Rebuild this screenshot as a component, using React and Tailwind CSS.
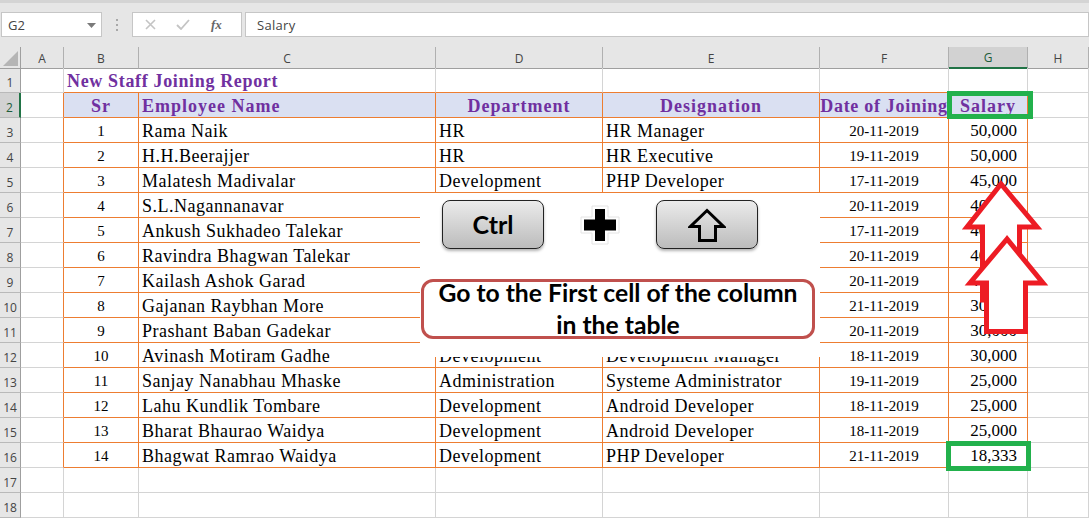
import React from "react";

const colWidths = "grid-cols-[21px_43px_75px_297px_167px_217px_129px_79px_61px]";
const letters = ["A", "B", "C", "D", "E", "F", "G", "H"];

const staff = [
  ["1", "Rama Naik", "HR", "HR Manager", "20-11-2019", "50,000"],
  ["2", "H.H.Beerajjer", "HR", "HR Executive", "19-11-2019", "50,000"],
  ["3", "Malatesh Madivalar", "Development", "PHP Developer", "17-11-2019", "45,000"],
  ["4", "S.L.Nagannanavar", "", "", "20-11-2019", "40,000"],
  ["5", "Ankush Sukhadeo Talekar", "", "", "17-11-2019", "40,000"],
  ["6", "Ravindra Bhagwan Talekar", "", "", "20-11-2019", "40,000"],
  ["7", "Kailash Ashok Garad", "", "", "20-11-2019", "40,000"],
  ["8", "Gajanan Raybhan More", "", "", "21-11-2019", "30,000"],
  ["9", "Prashant Baban Gadekar", "", "", "20-11-2019", "30,000"],
  ["10", "Avinash Motiram Gadhe", "Development", "Development Manager", "18-11-2019", "30,000"],
  ["11", "Sanjay Nanabhau Mhaske", "Administration", "Systeme Administrator", "19-11-2019", "25,000"],
  ["12", "Lahu Kundlik Tombare", "Development", "Android Developer", "18-11-2019", "25,000"],
  ["13", "Bharat Bhaurao Waidya", "Development", "Android Developer", "18-11-2019", "25,000"],
  ["14", "Bhagwat Ramrao Waidya", "Development", "PHP Developer", "21-11-2019", "18,333"],
];

function RowHead({ n, active }) {
  return (
    <div
      className={`h-[25px] flex items-center justify-center pt-[6px] border-b border-b-[#b9b9b9] border-r font-['Open_Sans',sans-serif] text-[12px] ${
        active ? "bg-[#d2d2d2] border-r-2 border-r-[#217346] text-[#1d5c3a]" : "bg-[#e6e6e6] border-r-[#9f9f9f] text-[#444]"
      }`}
    >
      {n}
    </div>
  );
}

function Blank({ edge }) {
  return <div className={`h-[25px] border-r border-r-[#d4d4d4] border-b ${edge ? "border-b-[#ed7d31]" : "border-b-[#d4d4d4]"}`} />;
}

function HeadCell({ children, left, tight }) {
  return (
    <div
      className={`h-[25px] flex items-center whitespace-nowrap pt-[2px] bg-[#dae0f2] border-r border-b border-[#ed7d31] font-bold text-[#7030a0] text-[18px] ${
        tight ? "tracking-[0.7px]" : "tracking-[1px]"
      } ${left ? "pl-[3px]" : "justify-center"}`}
    >
      {children}
    </div>
  );
}

// text is the font class of the cell, numbers run smaller than names
function Cell({ children, layout = "pl-[3px]", text = "text-[18px] tracking-[0.5px]" }) {
  return (
    <div className={`h-[25px] flex items-center whitespace-nowrap overflow-hidden pt-[2px] border-r border-b border-[#ed7d31] text-black ${layout} ${text}`}>
      {children}
    </div>
  );
}

function KeyCap({ children }) {
  return (
    <div className="w-[102px] h-[49px] flex items-center justify-center rounded-[8px] border border-[#222] bg-gradient-to-b from-[#ebebeb] to-[#bcbcbc] shadow-[0_2px_3px_rgba(0,0,0,0.3)]">
      {children}
    </div>
  );
}

function ToolBar() {
  return (
    <div className="h-[47px] pt-[9px] flex items-start bg-[#e6e6e6] border-t-[3px] border-t-[#d4d4d4]">
      <div className="ml-[1px] w-[101px] h-[25px] pt-[2px] flex items-center justify-between bg-white border border-[#c6c6c6] pl-[6px] pr-[5px] text-[13px] text-[#444]">
        <span>G2</span>
        <svg width="9" height="5" viewBox="0 0 9 5"><path d="M0 0h9L4.5 5z" fill="#7a7a7a" /></svg>
      </div>
      <div className="w-[30px] h-[25px] flex flex-col items-center justify-center gap-[3px]">
        <span className="w-[2px] h-[2px] bg-[#a8a8a8]" />
        <span className="w-[2px] h-[2px] bg-[#a8a8a8]" />
        <span className="w-[2px] h-[2px] bg-[#a8a8a8]" />
      </div>
      <div className="w-[110px] h-[25px] flex items-center bg-white border border-[#c6c6c6] pl-[12px] gap-[20px]">
        <svg width="11" height="11" viewBox="0 0 11 11"><path d="M1 1l9 9M10 1l-9 9" stroke="#c4c4c4" strokeWidth="1.6" fill="none" /></svg>
        <svg width="14" height="11" viewBox="0 0 14 11"><path d="M1 6l4 4 8-9" stroke="#c4c4c4" strokeWidth="1.8" fill="none" /></svg>
        <span className="ml-[1px] text-[13px] italic font-bold text-[#666] font-['Liberation_Serif',serif]">fx</span>
      </div>
      <div className="ml-[3px] flex-1 h-[25px] pt-[2px] flex items-center bg-white border border-[#c6c6c6] pl-[11px] text-[13px] text-[#444] tracking-[0.3px]">
        Salary
      </div>
    </div>
  );
}

function ColumnHeader() {
  return (
    <div className={`grid ${colWidths} h-[21px] bg-[#e6e6e6] font-['Open_Sans',sans-serif] text-[12px] text-[#444]`}>
      <div className="relative border-r border-r-[#9f9f9f] border-b border-b-[#9f9f9f]">
        <svg className="absolute right-[2px] bottom-[2px]" width="15" height="15" viewBox="0 0 15 15"><path d="M15 0v15H0z" fill="#b5b5b5" /></svg>
      </div>
      {letters.map((l) => (
        <div
          key={l}
          className={`flex items-center justify-center pt-[2px] border-r border-r-[#b0b0b0] border-b ${
            l === "G" ? "bg-[#d2d2d2] border-b-2 border-b-[#217346] text-[#1d5c3a]" : "border-b-[#9f9f9f]"
          }`}
        >
          {l}
        </div>
      ))}
    </div>
  );
}

function Sheet() {
  return (
    <div className={`grid ${colWidths} font-['Liberation_Serif',serif]`}>
      <RowHead n={1} />
      <Blank />
      <div className="col-span-2 h-[25px] flex items-center pl-[3px] pt-[3px] whitespace-nowrap border-r border-r-[#d4d4d4] border-b border-b-[#ed7d31] font-bold text-[#7030a0] text-[18px] tracking-[0.65px]">
        New Staff Joining Report
      </div>
      <Blank edge />
      <Blank edge />
      <Blank edge />
      <Blank edge />
      <Blank />

      <RowHead n={2} active />
      <div className="h-[25px] border-r border-r-[#ed7d31] border-b border-b-[#d4d4d4]" />
      <HeadCell>Sr</HeadCell>
      <HeadCell left>Employee Name</HeadCell>
      <HeadCell>Department</HeadCell>
      <HeadCell>Designation</HeadCell>
      <HeadCell tight>Date of Joining</HeadCell>
      <HeadCell>Salary</HeadCell>
      <Blank />

      {staff.map((row, i) => (
        <React.Fragment key={row[0]}>
          <RowHead n={i + 3} />
          <div className="h-[25px] border-r border-r-[#ed7d31] border-b border-b-[#d4d4d4]" />
          <Cell layout="justify-center" text="text-[15px]">{row[0]}</Cell>
          <Cell>{row[1]}</Cell>
          <Cell>{row[2]}</Cell>
          <Cell>{row[3]}</Cell>
          <Cell layout="justify-center" text="text-[15px]">{row[4]}</Cell>
          <Cell layout="justify-end pr-[10px]" text="text-[17px]">{row[5]}</Cell>
          <Blank />
        </React.Fragment>
      ))}

      {[17, 18].map((n) => (
        <React.Fragment key={n}>
          <RowHead n={n} />
          {letters.map((l) => (
            <Blank key={l} />
          ))}
        </React.Fragment>
      ))}
    </div>
  );
}

function ShortcutOverlay() {
  return (
    <div className="absolute left-[420px] top-[193px] w-[400px] h-[164px] bg-white font-['Lato',sans-serif]">
      <div className="flex items-center pl-[22px] pt-[7px]">
        <KeyCap>
          <span className="text-[25px] font-bold text-black">Ctrl</span>
        </KeyCap>
        <svg className="mx-[35px]" width="42" height="42" viewBox="0 0 42 42">
          <path d="M13 2h16v11h11v16H29v11H13V29H2V13h11z" fill="#fff" stroke="#e4e4e4" strokeWidth="1" />
          <path d="M16 5h10v10.500h11v11H26V37H16V26.500H5v-11h11z" fill="#000" />
        </svg>
        <KeyCap>
          <svg width="38" height="36" viewBox="0 0 38 36">
            <path d="M19 3.500L35.500 19.500H27.500V33.500H11.500V19.500H2.500z" fill="none" stroke="#000" strokeWidth="3" />
          </svg>
        </KeyCap>
      </div>
      <div className="ml-[1px] mt-[30px] w-[394px] h-[60px] flex items-center justify-center text-center rounded-[12px] border-[3px] border-[#c0504d] bg-white text-[24.700px] leading-[32px] font-bold text-black">
        <p className="pb-[1px]">
          Go to the First cell of the column
          <br />
          in the table
        </p>
      </div>
    </div>
  );
}

function RedArrows() {
  return (
    <svg className="absolute left-[955px] top-[172px]" width="100" height="170" viewBox="955 172 100 170">
      <path d="M1001 184L967 227H982.500V300H1019.500V227H1037z" fill="#fff" stroke="#ed1c24" strokeWidth="5" />
      <path d="M1007 239L970 283H986.500V331.500H1025.500V283H1043z" fill="#fff" stroke="#ed1c24" strokeWidth="5" />
    </svg>
  );
}

export default function App() {
  return (
    <div className="relative w-[1089px] h-[519px] overflow-hidden bg-white font-['Open_Sans',sans-serif]">
      <ToolBar />
      <ColumnHeader />
      <Sheet />
      <ShortcutOverlay />
      <RedArrows />
      <div className="absolute left-[947px] top-[91px] w-[86px] h-[28px] border-[5px] border-[#22b14c]" />
      <div className="absolute left-[946px] top-[441px] w-[85px] h-[30px] border-[5px] border-[#22b14c]" />
    </div>
  );
}
